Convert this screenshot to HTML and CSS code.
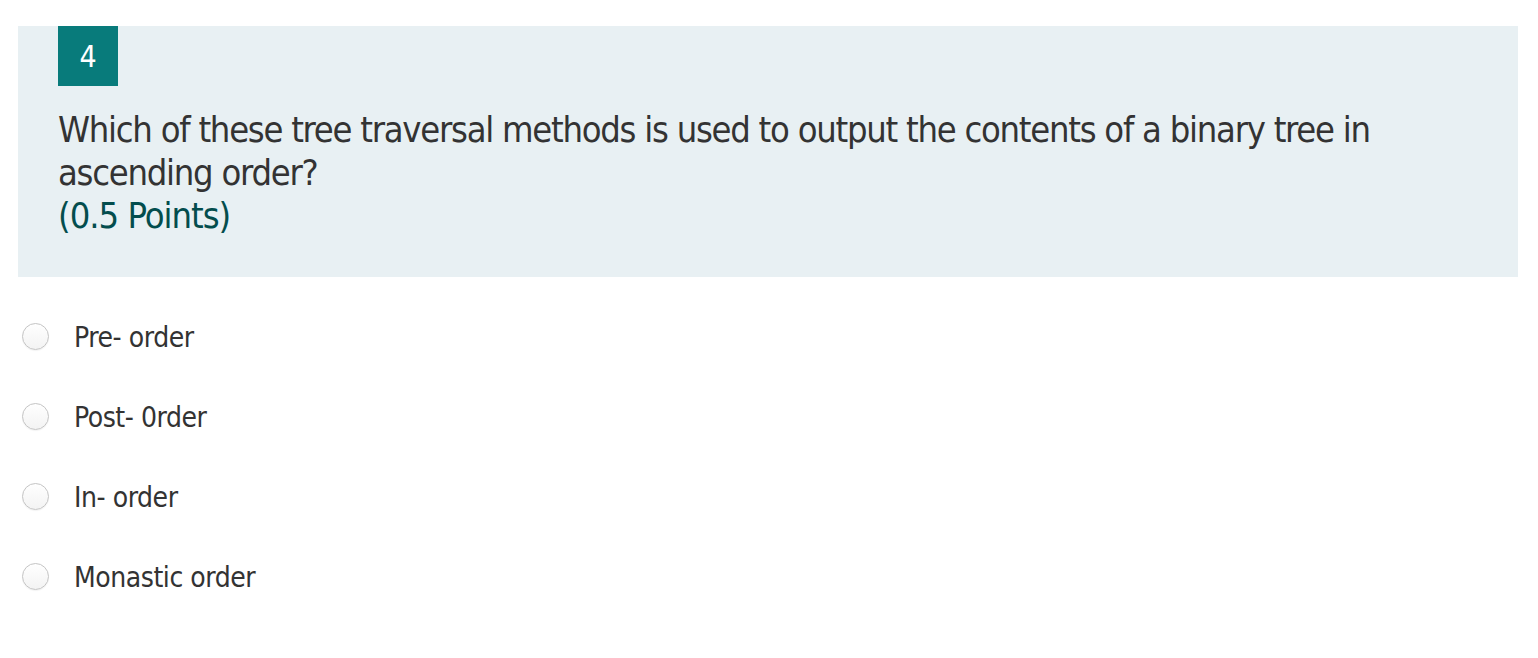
FILE: index.html
```html
<!DOCTYPE html>
<html lang="en">
<head>
<meta charset="utf-8">
<title>Question 4</title>
<link rel="stylesheet" href="styles.css">
</head>
<body>
<div class="question">
  <div class="panel">
    <div class="badge">4</div>
    <div class="title">
      Which of these tree traversal methods is used to output the contents of a binary tree in ascending order?
      <br><span class="points">(0.5 Points)</span>
    </div>
  </div>
  <div class="options">
    <label class="option"><span class="radio"></span><span class="label">Pre- order</span></label>
    <label class="option"><span class="radio"></span><span class="label">Post- 0rder</span></label>
    <label class="option"><span class="radio"></span><span class="label">In- order</span></label>
    <label class="option"><span class="radio"></span><span class="label">Monastic order</span></label>
  </div>
</div>
</body>
</html>
```
FILE: styles.css
```css
html, body {
  margin: 0;
  padding: 0;
  background: #ffffff;
}
body {
  font-family: "DejaVu Sans Condensed", "DejaVu Sans", sans-serif;
  color: #333333;
}
.question {
  padding: 26px 20px 0 18px;
}
.panel {
  background: #e8f0f3;
  padding: 0 40px 40px 40px;
}
.badge {
  width: 60px;
  height: 60px;
  background: #087b7b;
  color: #ffffff;
  font-size: 30px;
  display: flex;
  align-items: center;
  justify-content: center;
}
.title {
  margin-top: 22px;
  font-size: 36px;
  line-height: 43px;
  letter-spacing: -1.25px;
  color: #333333;
  max-width: 1360px;
}
.points {
  color: #034d4d;
  letter-spacing: -1px;
}
.options {
  display: flex;
  flex-direction: column;
  margin-top: 19px;
}
.option {
  display: flex;
  align-items: center;
  height: 80px;
  padding-left: 4px;
}
.radio {
  box-sizing: border-box;
  width: 27px;
  height: 27px;
  border-radius: 50%;
  border: 1px solid #c4c4c4;
  background: linear-gradient(#ffffff, #f3f3f3);
  box-shadow: 0 1px 1px rgba(0,0,0,0.05);
  flex: none;
}
.label {
  margin-left: 25px;
  padding-top: 3px;
  font-size: 28px;
  letter-spacing: -0.45px;
  color: #333333;
}
```
